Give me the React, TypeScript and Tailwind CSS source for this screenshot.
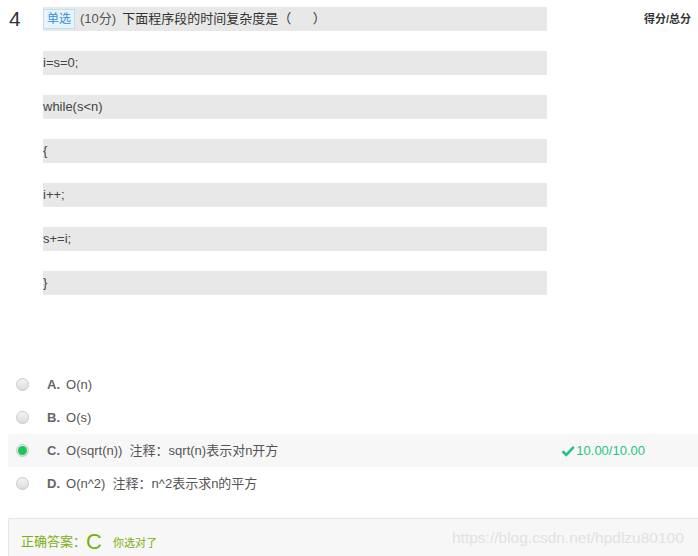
import React from 'react';

const codeLines = ['i=s=0;', 'while(s<n)', '{', 'i++;', 's+=i;', '}'];

const options = [
  { key: 'A', text: 'O(n)' },
  { key: 'B', text: 'O(s)' },
  { key: 'C', text: 'O(sqrt(n))  注释：sqrt(n)表示对n开方', chosen: true },
  { key: 'D', text: 'O(n^2)  注释：n^2表示求n的平方' },
];

const Radio: React.FC<{ checked?: boolean }> = ({ checked }) => (
  <span className="w-[13px] h-[13px] rounded-full border border-[#c8c8c8] bg-gradient-to-b from-[#f4f4f4] to-[#dcdcdc] flex items-center justify-center shrink-0">
    {checked && <span className="w-[9px] h-[9px] rounded-full bg-[#1cc75a]" />}
  </span>
);

export default function App() {
  return (
    <div
      className="relative w-[698px] h-[556px] overflow-hidden bg-white text-[#333]"
      style={{ fontFamily: '"Liberation Sans", "Noto Sans CJK SC", sans-serif' }}
    >
      {/* QUESTION */}
      <div className="flex pt-[7px]">
        <div className="w-[43px] pl-[9px] text-[21px] leading-[24px] text-[#333]">4</div>
        <div className="w-[504px]">
          <div className="h-[24px] bg-[#e8e8e8] flex items-center text-[13px]">
            <span className="h-[20px] px-[3px] flex items-center bg-[#e6f4fd] border border-[#bcdff5] text-[#3d8fd6] text-[12px]">
              单选
            </span>
            <span className="ml-[5px] text-[#555]">(10分)</span>
            <span className="ml-[6px] whitespace-pre">下面程序段的时间复杂度是（      ）</span>
          </div>
          {codeLines.map((line) => (
            <div key={line} className="mt-[20px] h-[24px] bg-[#e8e8e8] flex items-center text-[13px] text-[#444]">
              {line}
            </div>
          ))}
        </div>
        <div className="flex-1 flex justify-end pr-[7px] pt-[4px]">
          <span className="text-[11px] font-bold text-[#333]">得分/总分</span>
        </div>
      </div>

      {/* OPTIONS */}
      <div className="mt-[73px] pl-[8px]">
        {options.map((opt) => (
          <div
            key={opt.key}
            className={`h-[33px] flex items-center pl-[8px] pr-[53px] text-[13px] ${opt.chosen ? 'bg-[#f7f7f7]' : ''}`}
          >
            <Radio checked={opt.chosen} />
            <span className="ml-[18px] font-bold text-[#666]">{opt.key}.</span>
            <span className="ml-[6px] text-[#555] whitespace-pre">{opt.text}</span>
            {opt.chosen && (
              <span className="ml-auto flex items-center text-[#1ec584] text-[13px]">
                <svg width="14" height="12" viewBox="0 0 14 12" className="mr-[1px]">
                  <path d="M1.5 6.2 L5.2 9.8 L12.8 1.8" fill="none" stroke="#1ec584" strokeWidth="2.6" />
                </svg>
                10.00/10.00
              </span>
            )}
          </div>
        ))}
      </div>

      {/* ANSWER */}
      <div className="mt-[18px] ml-[8px] h-[60px] border-t border-l border-[#e6e6e6] bg-[#f7f7f7] flex items-start pt-[10px] pl-[12px] text-[#7cae13]">
        <span className="text-[13px] leading-[26px]">正确答案：</span>
        <span className="text-[22px] leading-[26px]">C</span>
        <span className="ml-[11px] text-[11px] leading-[28px]">你选对了</span>
      </div>

      {/* WATERMARK */}
      <span className="absolute left-[452px] top-[526px] text-[15.5px] text-[#e2e2e2] pointer-events-none">
        https://blog.csdn.net/hpdlzu80100
      </span>
    </div>
  );
}
